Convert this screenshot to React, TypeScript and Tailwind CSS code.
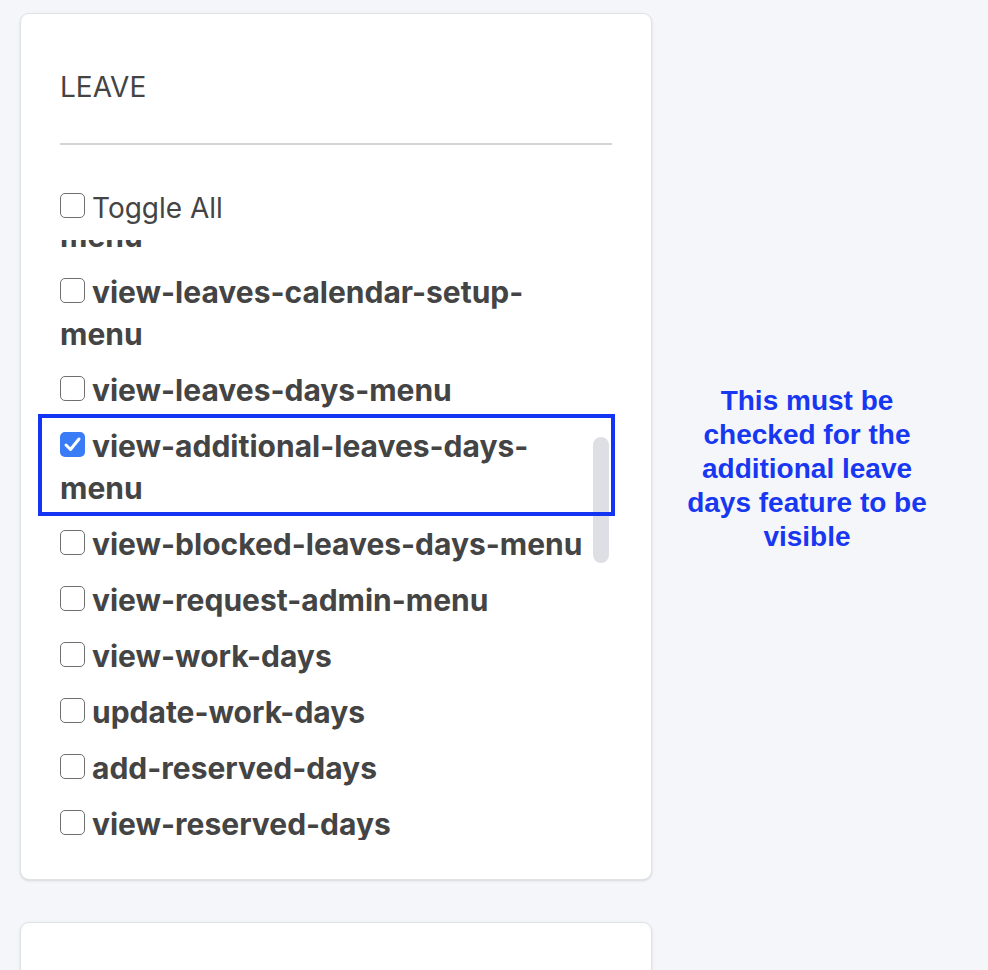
const items: { label: string; checked?: boolean }[] = [
  { label: "view-leaves-calendar-report-menu" },
  { label: "view-leaves-calendar-setup-menu" },
  { label: "view-leaves-days-menu" },
  { label: "view-additional-leaves-days-menu", checked: true },
  { label: "view-blocked-leaves-days-menu" },
  { label: "view-request-admin-menu" },
  { label: "view-work-days" },
  { label: "update-work-days" },
  { label: "add-reserved-days" },
  { label: "view-reserved-days" },
  { label: "delete-reserved-days" },
];

function Box({ checked }: { checked?: boolean }) {
  if (checked) {
    return (
      <span className="relative inline-block w-[25px] h-[25px] mr-[7px] align-baseline rounded-[5px] bg-[#3a7cf6]">
        <svg viewBox="0 0 25 25" className="absolute inset-0 w-full h-full">
          <path d="M6 13 L10.5 17.5 L19 7" fill="none" stroke="white" strokeWidth="3" strokeLinecap="round" strokeLinejoin="round" />
        </svg>
      </span>
    );
  }
  return (
    <span className="inline-block w-[25px] h-[25px] mr-[7px] align-baseline rounded-[5px] border-[1.5px] border-[#6f6f6f] bg-white" />
  );
}

export default function App() {
  return (
    <div className="min-h-screen bg-[#f5f6fa] pt-[13px] pl-[20px] flex overflow-hidden h-[970px]" style={{ fontFamily: "Inter, 'Noto Sans', sans-serif" }}>
      <div className="w-[632px] shrink-0">
        {/* Permission card */}
        <div className="relative h-[867px] rounded-[9px] border border-[#e1e2e6] bg-white shadow-sm px-[39px] pt-[52px]">
          <h3 className="text-[28px] leading-[42px] text-[#444]">LEAVE</h3>
          <div className="mt-[35px] h-[2px] bg-[#d4d4d4]" />

          <label className="mt-[42px] block text-[28px] leading-[42px] text-[#444]">
            <Box />
            Toggle All
          </label>

          <div className="relative mt-[11px] h-[600px] w-[552px] overflow-hidden">
            <div className="mt-[-67px] w-[533px]">
              {items.map((it) => (
                <label key={it.label} className="block mb-[14px] text-[30px] leading-[42px] font-bold text-[#444]">
                  <Box checked={it.checked} />
                  {it.label}
                </label>
              ))}
            </div>
            {/* scrollbar thumb */}
            <div className="absolute left-[533px] top-[197px] w-[16px] h-[126px] rounded-full bg-[#dedfe4]" />
          </div>

          {/* annotation box */}
          <div className="absolute left-[17px] top-[400px] w-[577px] h-[102px] border-[4px] border-[#1434f4]" />
        </div>

        <div className="mt-[42px] h-[200px] rounded-[9px] border border-[#e1e2e6] bg-white shadow-sm" />
      </div>

      <div className="w-[310px] shrink-0 pt-[371px] text-center text-[28px] leading-[34px] font-bold text-[#1737f0]" style={{ fontFamily: "'Liberation Sans', Arial, sans-serif" }}>
        This must be
        <br />
        checked for the
        <br />
        additional leave
        <br />
        days feature to be
        <br />
        visible
      </div>
    </div>
  );
}
